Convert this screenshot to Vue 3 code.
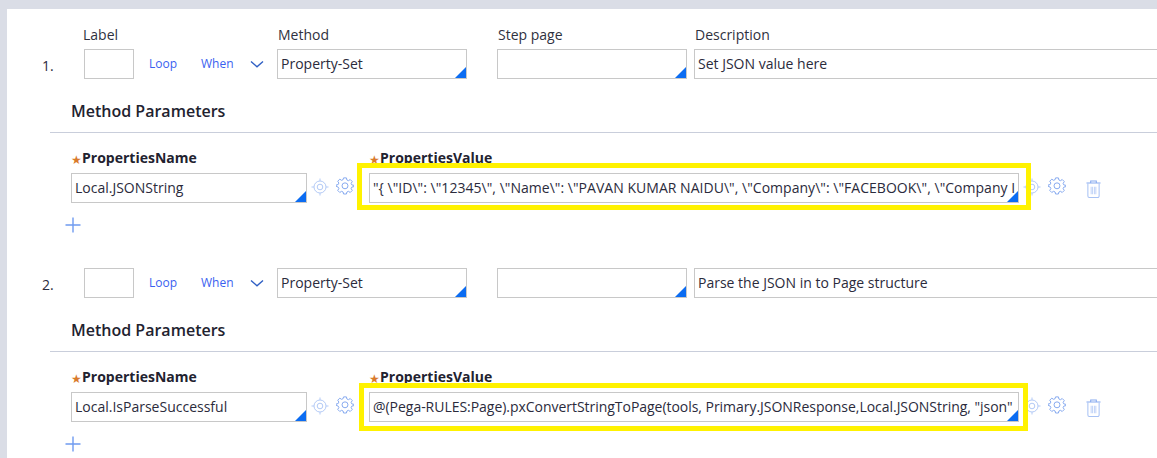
<script setup>
const steps = [
  {
    n: '1.',
    desc: 'Set JSON value here',
    name: 'Local.JSONString',
    value: '"{ \\"ID\\": \\"12345\\", \\"Name\\": \\"PAVAN KUMAR NAIDU\\", \\"Company\\": \\"FACEBOOK\\", \\"Company I',
    wide: true,
    head: true
  },
  {
    n: '2.',
    desc: 'Parse the JSON in to Page structure',
    name: 'Local.IsParseSuccessful',
    value: '@(Pega-RULES:Page).pxConvertStringToPage(tools, Primary.JSONResponse,Local.JSONString, "json"',
    wide: false,
    head: false
  }
]
</script>

<template>
  <div class="shell">
    <div class="sheet">
      <section v-for="s in steps" :key="s.n" class="step" :class="{ first: s.head }">
        <div v-if="s.head" class="cols heads">
          <span></span>
          <span class="cap cap-l">Label</span>
          <span></span>
          <span class="cap">Method</span>
          <span class="cap">Step page</span>
          <span class="cap">Description</span>
        </div>
        <div class="cols">
          <span class="num">{{ s.n }}</span>
          <div class="field small"></div>
          <div class="links">
            <a class="loop">Loop</a>
            <a class="when">When</a>
            <svg class="chev" width="14" height="8" viewBox="0 0 14 8"><path d="M1 1.5 L7 6.8 L13 1.5" fill="none" stroke="#2f5fc4" stroke-width="1.4"/></svg>
          </div>
          <div class="field mid tri"><span class="txt">Property-Set</span></div>
          <div class="field mid tri"></div>
          <div class="field desc"><span class="txt">{{ s.desc }}</span></div>
        </div>

        <h3 class="mp">Method Parameters</h3>
        <div class="rule"></div>

        <div class="params">
          <div class="pcol pname">
            <label class="plabel"><i>★</i>PropertiesName</label>
            <div class="field name tri"><span class="txt">{{ s.name }}</span></div>
          </div>
          <svg class="ic target" width="18" height="18" viewBox="0 0 18 18" fill="none" stroke="#b3caf6" stroke-width="1">
            <circle cx="9" cy="9" r="6"/><circle cx="9" cy="9" r="2.8"/>
            <path d="M9 0.5V3M9 15v2.5M0.5 9H3M15 9h2.5"/>
          </svg>
          <svg class="ic gear" width="18" height="18" viewBox="0 0 20 20" fill="none" stroke="#86a9ef" stroke-width="1.1">
            <path d="M8.4 1h3.2l.5 2.3 1.7.8 2-1.3 2.3 2.3-1.3 2 .8 1.7 2.3.5v1.4l-2.3.5-.8 1.7 1.3 2-2.3 2.3-2-1.3-1.7.8-.5 2.2H8.4l-.5-2.2-1.7-.8-2 1.3-2.3-2.3 1.3-2-.8-1.7L.1 10.300V8.900l2.300-.5.8-1.700-1.300-2 2.300-2.300 2 1.300 1.700-.8z"/>
            <circle cx="10" cy="9.800" r="3.300"/>
          </svg>
          <div class="pcol pvalue">
            <label class="plabel"><i>★</i>PropertiesValue</label>
            <div class="field value tri"><span class="txt" :class="s.wide ? 'loose' : 'tight'">{{ s.value }}</span></div>
            <div class="mark" :class="{ wide: s.wide }"></div>
          </div>
          <svg class="ic target" width="18" height="18" viewBox="0 0 18 18" fill="none" stroke="#b3caf6" stroke-width="1">
            <circle cx="9" cy="9" r="6"/><circle cx="9" cy="9" r="2.8"/>
            <path d="M9 0.5V3M9 15v2.5M0.5 9H3M15 9h2.5"/>
          </svg>
          <svg class="ic gear" width="18" height="18" viewBox="0 0 20 20" fill="none" stroke="#86a9ef" stroke-width="1.1">
            <path d="M8.4 1h3.2l.5 2.3 1.7.8 2-1.3 2.3 2.3-1.3 2 .8 1.7 2.3.5v1.4l-2.3.5-.8 1.7 1.3 2-2.3 2.3-2-1.3-1.7.8-.5 2.2H8.4l-.5-2.2-1.7-.8-2 1.3-2.3-2.3 1.3-2-.8-1.7L.1 10.300V8.900l2.300-.5.8-1.700-1.300-2 2.300-2.300 2 1.300 1.700-.8z"/>
            <circle cx="10" cy="9.800" r="3.300"/>
          </svg>
          <svg class="ic trash" width="15" height="18" viewBox="0 0 16 19" fill="none" stroke="#a8c2f4" stroke-width="1.1">
            <path d="M0.500 3h15M5 3V1h6v2" stroke="#86a9ef"/>
            <path d="M2 3.500V17a1.500 1.500 0 0 0 1.500 1.500h9A1.500 1.500 0 0 0 14 17V3.500"/>
            <path d="M5.500 7v8M7 7v8M9 7v8M10.500 7v8" stroke="#c4d5f8"/>
          </svg>
        </div>

        <svg class="plus" width="16" height="16" viewBox="0 0 16 16"><path d="M8 0.500V15.500M0.500 8H15.500" stroke="#6f9bf0" stroke-width="1.400" fill="none"/></svg>
      </section>
    </div>
  </div>
</template>

<style scoped>
.shell {
  width: 1157px;
  height: 458px;
  overflow: hidden;
  background: #dadde6;
  padding: 9px 0 0 7px;
  box-sizing: border-box;
  font-family: "Open Sans", sans-serif;
  font-size: 14px;
  color: #2b2b3c;
}
.sheet {
  background: #fff;
  width: 1300px;
  height: 460px;
}
.step {
  padding-top: 40px;
  height: 219px;
  box-sizing: border-box;
}
.step.first {
  padding-top: 15px;
}
.cols {
  display: grid;
  grid-template-columns: 42px 50px 143px 220px 197px 500px;
  margin-left: 35px;
  height: 30px;
  align-items: center;
}
.heads {
  height: 25px;
  align-items: start;
  line-height: 22px;
}
.cap { color: #2f3140; margin-left: 1px; }
.cap-l { margin-left: -1px; }
.num { color: #2b2b3c; padding-top: 2px; }
.field {
  position: relative;
  height: 30px;
  box-sizing: border-box;
  border: 1px solid #c8c8c8;
  background: #fff;
  display: flex;
  align-items: center;
  padding-left: 3px;
  overflow: hidden;
}
.tri::after {
  content: "";
  position: absolute;
  right: 0;
  bottom: 0;
  border-style: solid;
  border-width: 0 0 11px 11px;
  border-color: transparent transparent #0b6cf2 transparent;
}
.small { width: 50px; }
.mid { width: 190px; }
.desc { width: 500px; }
.txt { white-space: nowrap; line-height: 20px; }
.loose { letter-spacing: 0.03px; }
.tight { letter-spacing: -0.035px; }
.links {
  display: flex;
  align-items: center;
  height: 30px;
  padding: 0 0 2px 15px;
  box-sizing: border-box;
  font-size: 12px;
  color: #3a5ff0;
}
.loop { width: 52px; }
.when { width: 49px; }
.chev { display: block; margin-top: 2px; }
.mp {
  margin: 20px 0 0 64px;
  font-size: 16px;
  font-weight: 600;
  line-height: 24px;
  color: #22222f;
}
.rule {
  margin: 9px 0 0 43px;
  height: 1px;
  background: #c9cedb;
}
.params {
  display: flex;
  align-items: flex-end;
  margin: 16px 0 0 64px;
}
.pcol { display: flex; flex-direction: column; position: relative; }
.plabel {
  font-weight: 700;
  font-size: 14px;
  line-height: 18px;
  margin-bottom: 6px;
  color: #22222f;
  white-space: nowrap;
}
.plabel i {
  display: inline-block;
  width: 10px;
  padding-right: 1px;
  text-align: right;
  font-family: "DejaVu Sans", sans-serif;
  font-style: normal;
  font-weight: 400;
  font-size: 12px;
  line-height: 10px;
  vertical-align: -1px;
  color: #d97a2b;
}
.name { width: 236px; }
.value { width: 650px; padding-right: 2px; }
.pname { width: 236px; }
.pvalue { width: 650px; margin-left: 15px; }
.ic { display: block; flex: none; }
.target { margin: 0 0 7px 4px; }
.gear { margin: 0 0 8px 7px; }
.trash { margin: 0 0 5px 20px; }
.mark {
  position: absolute;
  left: -10px;
  right: -9px;
  bottom: -9px;
  height: 48px;
  box-sizing: border-box;
  border: 5px solid #fff200;
  pointer-events: none;
}
.mark.wide {
  left: -12px;
  right: -12px;
  bottom: -7px;
  height: 47px;
}
.plus {
  display: block;
  margin: 14px 0 0 58px;
}
</style>
